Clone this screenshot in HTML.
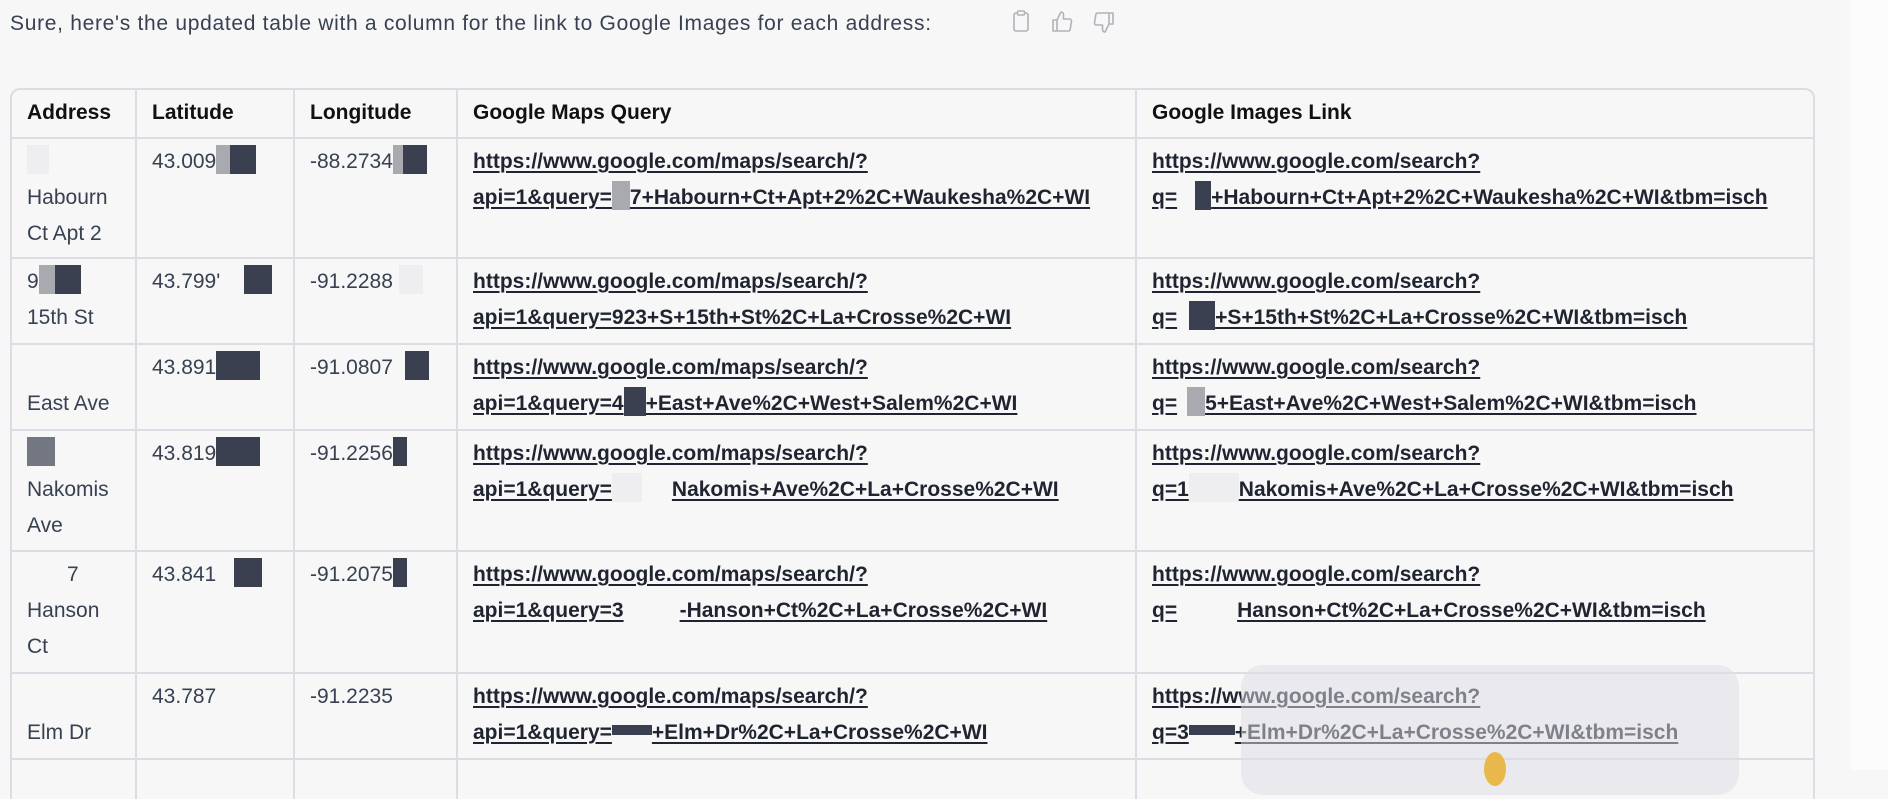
<!DOCTYPE html>
<html><head><meta charset="utf-8"><style>
html,body{margin:0;padding:0;}
body{width:1888px;height:770px;overflow:hidden;background:#f7f7f8;position:relative;font-family:"Liberation Sans",sans-serif;color:#374151;}
.top{position:absolute;left:10px;top:10px;font-size:21px;letter-spacing:0.7px;color:#374151;line-height:28px;}
.ic{position:absolute;top:10px;}
.strip{position:absolute;left:1851px;top:0;width:37px;height:770px;background:#fcfcfd;}
.tbl{position:absolute;left:10px;top:88px;width:1801px;border:2px solid #dcdce4;border-bottom:none;border-radius:10px 10px 0 0;overflow:hidden;}
table{border-collapse:collapse;table-layout:fixed;width:100%;font-size:21px;}
td,th{border-left:2px solid #dcdce4;border-top:2px solid #dcdce4;padding:5px 15px;line-height:36px;vertical-align:top;text-align:left;white-space:nowrap;}
th{border-top:none;color:#111;font-weight:bold;}
tr td:first-child,tr th:first-child{border-left:none;white-space:normal;}
td.l{font-weight:bold;color:#1f2430;}
td.l span.u{text-decoration:underline;text-decoration-thickness:2px;text-underline-offset:3px;}
.r{display:inline-block;height:29px;vertical-align:-6px;}
.d{background:#3a4050;}
.g{background:#a8aab0;}
.lg{background:#eeeef1;}
.sp{display:inline-block;}
.ov{position:absolute;left:1241px;top:665px;width:498px;height:130px;border-radius:22px;background:rgba(222,222,227,0.5);}
.thumb{position:absolute;left:1484px;top:752px;width:22px;height:34px;border-radius:50%;background:#e8b94a;}
</style></head><body>
<div class="strip"></div>
<div class="top">Sure, here's the updated table with a column for the link to Google Images for each address:</div>
<svg class="ic" style="left:1011px" width="20" height="24" viewBox="0 0 20 24"><rect x="3" y="3" width="14" height="18" rx="2" fill="none" stroke="#b0b3bb" stroke-width="1.6"/><rect x="6.5" y="1" width="7" height="4" rx="1" fill="#f7f7f8" stroke="#b0b3bb" stroke-width="1.5"/></svg>
<svg class="ic" style="left:1050px" width="24" height="24" viewBox="0 0 24 24" fill="none" stroke="#b0b3bb" stroke-width="1.6" stroke-linejoin="round"><path d="M7 10v11H3V10zM7 10l4-8c1.5 0 2.5 1 2.5 2.5V9h6a2 2 0 0 1 2 2.3l-1.3 8A2 2 0 0 1 18.2 21H7"/></svg>
<svg class="ic" style="left:1092px" width="24" height="24" viewBox="0 0 24 24" fill="none" stroke="#b0b3bb" stroke-width="1.6" stroke-linejoin="round"><path d="M17 14V3h4v11zM17 14l-4 8c-1.5 0-2.5-1-2.5-2.5V15h-6a2 2 0 0 1-2-2.3l1.3-8A2 2 0 0 1 5.8 3H17"/></svg>
<div class="tbl"><table>
<colgroup><col style="width:124px"><col style="width:158px"><col style="width:163px"><col style="width:679px"><col></colgroup>
<tr style="height:48px"><th>Address</th><th>Latitude</th><th>Longitude</th><th>Google Maps Query</th><th>Google Images Link</th></tr>
<tr style="height:120px"><td><span class="r lg" style="width:22px"></span><br>Habourn Ct Apt 2</td><td>43.009<span class="r g" style="width:14px"></span><span class="r d" style="width:26px"></span></td><td>-88.2734<span class="r g" style="width:10px"></span><span class="r d" style="width:24px"></span></td><td class="l"><span class="u">https://www.google.com/maps/search/?</span><br><span class="u">api=1&amp;query=<span class="r g" style="width:18px"></span>7+Habourn+Ct+Apt+2%2C+Waukesha%2C+WI</span></td><td class="l"><span class="u">https://www.google.com/search?</span><br><span class="u">q=<span class="sp" style="width:18px"></span><span class="r d" style="width:16px"></span>+Habourn+Ct+Apt+2%2C+Waukesha%2C+WI&amp;tbm=isch</span></td></tr>
<tr style="height:86px"><td>9<span class="r g" style="width:16px"></span><span class="r d" style="width:26px"></span><br>15th St</td><td>43.799' &nbsp;&nbsp;&nbsp;<span class="r d" style="width:28px"></span></td><td>-91.2288 <span class="r lg" style="width:24px"></span></td><td class="l"><span class="u">https://www.google.com/maps/search/?</span><br><span class="u">api=1&amp;query=923+S+15th+St%2C+La+Crosse%2C+WI</span></td><td class="l"><span class="u">https://www.google.com/search?</span><br><span class="u">q=<span class="sp" style="width:12px"></span><span class="r d" style="width:26px"></span>+S+15th+St%2C+La+Crosse%2C+WI&amp;tbm=isch</span></td></tr>
<tr style="height:86px"><td><br>East Ave</td><td>43.891<span class="r d" style="width:44px"></span></td><td>-91.0807 &nbsp;<span class="r d" style="width:24px"></span></td><td class="l"><span class="u">https://www.google.com/maps/search/?</span><br><span class="u">api=1&amp;query=4<span class="r d" style="width:22px"></span>+East+Ave%2C+West+Salem%2C+WI</span></td><td class="l"><span class="u">https://www.google.com/search?</span><br><span class="u">q=<span class="sp" style="width:10px"></span><span class="r g" style="width:18px"></span>5+East+Ave%2C+West+Salem%2C+WI&amp;tbm=isch</span></td></tr>
<tr style="height:121px"><td><span class="r" style="width:28px;background:#737782"></span><br>Nakomis Ave</td><td>43.819<span class="r d" style="width:44px"></span></td><td>-91.2256<span class="r d" style="width:14px"></span></td><td class="l"><span class="u">https://www.google.com/maps/search/?</span><br><span class="u">api=1&amp;query=<span class="r lg" style="width:30px"></span><span class="sp" style="width:30px"></span>Nakomis+Ave%2C+La+Crosse%2C+WI</span></td><td class="l"><span class="u">https://www.google.com/search?</span><br><span class="u">q=1<span class="r lg" style="width:50px"></span>Nakomis+Ave%2C+La+Crosse%2C+WI&amp;tbm=isch</span></td></tr>
<tr style="height:122px"><td><span class="sp" style="width:40px"></span>7<br>Hanson Ct</td><td>43.841 &nbsp;&nbsp;<span class="r d" style="width:28px"></span></td><td>-91.2075<span class="r d" style="width:14px"></span></td><td class="l"><span class="u">https://www.google.com/maps/search/?</span><br><span class="u">api=1&amp;query=3<span class="sp" style="width:56px"></span>-Hanson+Ct%2C+La+Crosse%2C+WI</span></td><td class="l"><span class="u">https://www.google.com/search?</span><br><span class="u">q=<span class="sp" style="width:60px"></span>Hanson+Ct%2C+La+Crosse%2C+WI&amp;tbm=isch</span></td></tr>
<tr style="height:86px"><td><br>Elm Dr</td><td>43.787</td><td>-91.2235</td><td class="l"><span class="u">https://www.google.com/maps/search/?</span><br><span class="u">api=1&amp;query=<span class="r d" style="width:40px;height:10px;vertical-align:4px"></span>+Elm+Dr%2C+La+Crosse%2C+WI</span></td><td class="l"><span class="u">https://www.google.com/search?</span><br><span class="u">q=3<span class="r d" style="width:46px;height:10px;vertical-align:4px"></span>+Elm+Dr%2C+La+Crosse%2C+WI&amp;tbm=isch</span></td></tr>
<tr style="height:40px"><td></td><td></td><td></td><td></td><td></td></tr>
</table></div>
<div class="ov"></div>
<div class="thumb"></div>
</body></html>
